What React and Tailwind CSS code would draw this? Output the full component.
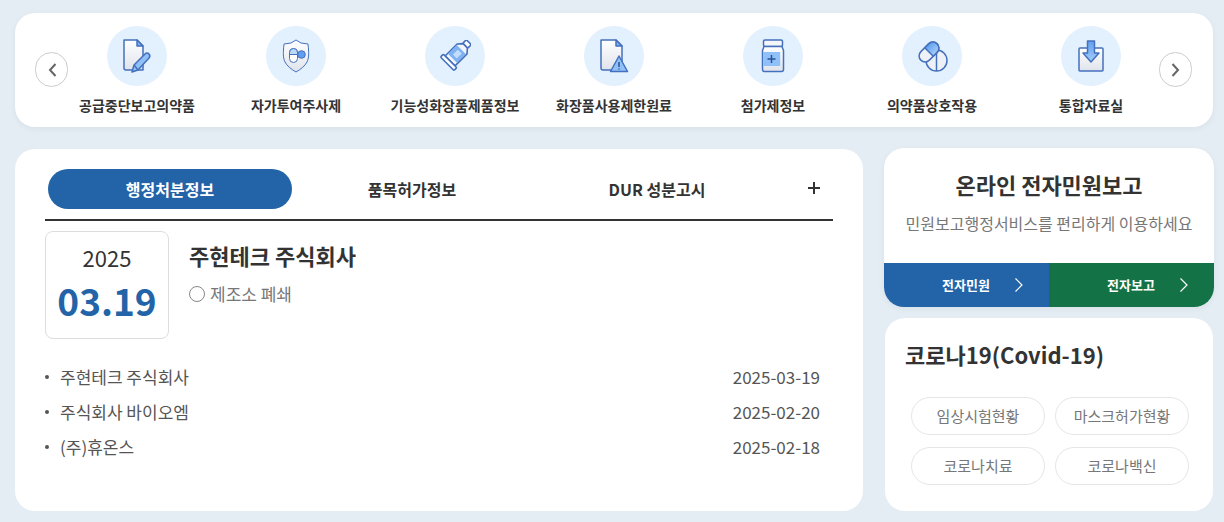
import React from "react";

const STROKE = "#4570bd";

const Grads = () => (
  <svg width="0" height="0" className="absolute">
    <defs>
      <linearGradient id="paper" x1="0" y1="0" x2="0" y2="1">
        <stop offset="0" stopColor="#ffffff" />
        <stop offset="1" stopColor="#dfe3ea" />
      </linearGradient>
      <linearGradient id="sky" x1="0" y1="0" x2="0" y2="1">
        <stop offset="0" stopColor="#5f9ff0" />
        <stop offset="1" stopColor="#a5cdf8" />
      </linearGradient>
    </defs>
  </svg>
);

const DocIcon = () => (
  <svg width="30" height="34" viewBox="0 0 30 34" fill="none" stroke={STROKE} strokeWidth="1.5" strokeLinejoin="round">
    <path d="M2 1h13l6 6v24H4a2 2 0 0 1-2-2z" fill="url(#paper)" />
    <path d="M15 1v6h6z" fill="#7fb2f2" />
    <path d="M10 33l2-7L23 15a2.500 2.500 0 0 1 4 0 3 3 0 0 1 0 4L16 31z" fill="#8fc0f7" />
    <path d="M12 26l4 5" />
  </svg>
);

const ShieldIcon = () => (
  <svg width="28" height="34" viewBox="0 0 28 34" fill="none" stroke={STROKE} strokeWidth="1">
    <path d="M14 1l5 3 7 1c1 9 1 14-1 18-2 4-6 7-11 10C9 30 5 27 3 23 1 19 1 14 2 5l7-1z" fill="url(#paper)" />
    <rect x="7.500" y="9.500" width="8" height="14" rx="4" fill="#fff" />
    <path d="M7.500 15.500v-2a4 4 0 0 1 8 0v2z" fill="#bcd9fa" />
    <path d="M7.500 15.500h8" />
    <circle cx="19.500" cy="15.500" r="3.800" fill="#5f9ff0" />
  </svg>
);

const TubeIcon = () => (
  <svg width="32" height="32" viewBox="0 0 32 32" fill="none" stroke={STROKE} strokeWidth="1.600" strokeLinejoin="round">
    <g transform="rotate(45 16 16)">
      <rect x="12.500" y="-3.500" width="7" height="5" rx="1" fill="#fff" />
      <path d="M13 1.500h6l4 4.500v17H9V6z" fill="#f2f5f9" />
      <rect x="9.800" y="7" width="12.400" height="12.500" fill="#7fb2f2" stroke="none" />
      <rect x="13.500" y="9.500" width="5.500" height="7" fill="#c4ddfa" stroke="none" />
      <rect x="6.500" y="23" width="19" height="4" rx="1" fill="#fff" />
    </g>
  </svg>
);

const WarnIcon = () => (
  <svg width="30" height="34" viewBox="0 0 30 34" fill="none" stroke={STROKE} strokeWidth="1.500" strokeLinejoin="round">
    <path d="M2 1h15l6 6v24H4a2 2 0 0 1-2-2z" fill="url(#paper)" />
    <path d="M17 1v6h6z" fill="#7fb2f2" />
    <path d="M20 17l8.500 15.500h-17z" fill="#8fc0f7" />
    <path d="M20 23v5M20 29.500v1" stroke="#2b4f93" />
  </svg>
);

const BottleIcon = () => (
  <svg width="24" height="34" viewBox="0 0 24 34" fill="none" stroke={STROKE} strokeWidth="1.500" strokeLinejoin="round">
    <rect x="2.500" y="1" width="19" height="6.500" rx="1.500" fill="#f4f6f9" />
    <path d="M3 7.500h18l1.500 4v19a2 2 0 0 1-2 2h-17a2 2 0 0 1-2-2v-19z" fill="url(#paper)" />
    <rect x="2.200" y="13" width="17" height="14" fill="#8fc0f7" stroke="none" />
    <path d="M6.500 20h8M10.500 16v8" stroke="#2b4f93" />
  </svg>
);

const PillIcon = () => (
  <svg width="32" height="32" viewBox="0 0 32 32" fill="none" stroke={STROKE} strokeWidth="1.500">
    <circle cx="20.500" cy="20.500" r="10.500" fill="#edf0f5" />
    <path d="M20.500 13v18" />
    <g transform="rotate(-45 13 12)">
      <rect x="1.500" y="6" width="23" height="12" rx="6" fill="#eef1f6" />
      <path d="M13 6h5.500a6 6 0 0 1 0 12H13z" fill="url(#sky)" />
    </g>
  </svg>
);

const DownIcon = () => (
  <svg width="26" height="32" viewBox="0 0 26 32" fill="none" stroke={STROKE} strokeWidth="1.500" strokeLinejoin="round">
    <rect x="1" y="8" width="24" height="23" rx="1" fill="url(#paper)" />
    <path d="M9.500 1h7v12H21l-8 9-8-9h4.500z" fill="url(#sky)" />
  </svg>
);

const Chevron = ({ dir, cls, thin }) => (
  <svg width="10" height="16" viewBox="0 0 10 16" fill="none" stroke="currentColor" className={cls}>
    {thin ? (
      <path d="M1.500 1.500L8 8l-6.500 6.500" strokeWidth="1.200" />
    ) : (
      <path d={dir === "left" ? "M8.500 2L3 8l5.500 6" : "M1.500 2L7 8l-5.500 6"} strokeWidth="2" />
    )}
  </svg>
);

const slides = [
  { label: "공급중단보고의약품", icon: <DocIcon /> },
  { label: "자가투여주사제", icon: <ShieldIcon /> },
  { label: "기능성화장품제품정보", icon: <TubeIcon /> },
  { label: "화장품사용제한원료", icon: <WarnIcon /> },
  { label: "첨가제정보", icon: <BottleIcon /> },
  { label: "의약품상호작용", icon: <PillIcon /> },
  { label: "통합자료실", icon: <DownIcon /> },
];

const news = [
  { name: "주현테크 주식회사", date: "2025-03-19" },
  { name: "주식회사 바이오엠", date: "2025-02-20" },
  { name: "(주)휴온스", date: "2025-02-18" },
];

const covid = ["임상시험현황", "마스크허가현황", "코로나치료", "코로나백신"];

const App = () => {
  return (
    <div className="w-[1224px] h-[522px] overflow-hidden bg-[#e4ecf4] px-[15px] pt-[13px] text-[#333] font-['Noto_Sans_CJK_KR','Noto_Sans',sans-serif]">
      <Grads />
      <section className="relative w-[1198px] h-[114px] rounded-[20px] bg-white shadow-[0_2px_6px_rgba(0,0,0,0.05)] flex justify-center pt-[13px]">
        <button type="button" className="absolute left-[20px] top-[39px] w-[33px] h-[35px] rounded-full border border-[#ccc] bg-white text-[#666] flex items-center justify-center">
          <Chevron dir="left" />
        </button>
        {slides.map((s) => (
          <div key={s.label} className="w-[159px] flex flex-col items-center">
            <div className="w-[60px] h-[60px] rounded-full bg-[#e3f0fd] flex items-center justify-center">{s.icon}</div>
            <span className="mt-[9px] text-[14px] leading-[20px] font-bold text-[#333] whitespace-nowrap">{s.label}</span>
          </div>
        ))}
        <button type="button" className="absolute right-[21px] top-[39px] w-[33px] h-[35px] rounded-full border border-[#ccc] bg-white text-[#666] flex items-center justify-center">
          <Chevron dir="right" />
        </button>
      </section>

      <div className="flex mt-[21px]">
        <section className="w-[848px] h-[362px] mt-[1px] rounded-[20px] bg-white px-[30px] pt-[20px]">
          <div className="w-[788px] h-[52px] border-b-2 border-[#333] flex items-start text-[16px] font-bold">
            <div className="ml-[3px] w-[244px] h-[40px] rounded-full bg-[#2364a8] text-white flex items-center justify-center">행정처분정보</div>
            <div className="w-[240px] h-[40px] flex items-center justify-center">품목허가정보</div>
            <div className="w-[250px] h-[40px] flex items-center justify-center">DUR 성분고시</div>
            <svg width="12" height="12" viewBox="0 0 12 12" className="ml-[26px] mt-[13px]" stroke="#333" strokeWidth="2">
              <path d="M6 0v12M0 6h12" />
            </svg>
          </div>
          <div className="flex mt-[10px]">
            <div className="w-[124px] h-[108px] rounded-[8px] border border-[#ddd] flex flex-col items-center">
              <span className="mt-[9px] text-[22px] leading-[32px] text-[#333]">2025</span>
              <span className="mt-[2px] text-[37px] leading-[50px] font-bold text-[#2364a8]">03.19</span>
            </div>
            <div className="ml-[20px]">
              <h3 className="mt-[8px] text-[22px] leading-[32px] font-bold text-[#333]">주현테크 주식회사</h3>
              <div className="mt-[11px] flex items-center text-[17px] leading-[24px] text-[#777]">
                <span className="w-[16px] h-[16px] rounded-full border border-[#888] mr-[5px]" />
                제조소 폐쇄
              </div>
            </div>
          </div>
          <ul className="mt-[20px] w-[775px]">
            {news.map((n) => (
              <li key={n.name} className="h-[35px] flex items-center justify-between text-[17px] text-[#555]">
                <span className="flex items-center">
                  <span className="w-[4px] h-[4px] rounded-full bg-[#555] mr-[11px]" />
                  {n.name}
                </span>
                <span>{n.date}</span>
              </li>
            ))}
          </ul>
        </section>

        <div className="ml-[21px] w-[330px]">
          <section className="h-[159px] rounded-[20px] bg-white overflow-hidden flex flex-col shadow-[0_2px_6px_rgba(0,0,0,0.05)]">
            <h3 className="mt-[19px] text-center text-[22px] leading-[34px] font-bold text-[#333]">온라인 전자민원보고</h3>
            <p className="mt-[11px] text-center text-[16px] leading-[22px] text-[#777]">민원보고행정서비스를 편리하게 이용하세요</p>
            <div className="mt-auto h-[44px] flex text-white text-[13px] font-bold">
              <div className="w-[165px] bg-[#2364a8] flex items-center pl-[58px]">
                <span>전자민원</span>
                <Chevron thin cls="ml-[24px]" />
              </div>
              <div className="w-[165px] bg-[#147346] flex items-center pl-[58px]">
                <span>전자보고</span>
                <Chevron thin cls="ml-[24px]" />
              </div>
            </div>
          </section>
          <section className="mt-[11px] mx-[1px] h-[193px] rounded-[20px] bg-white px-[20px] pt-[18px]">
            <h3 className="text-[22px] leading-[36px] font-bold text-[#333]">코로나19(Covid-19)</h3>
            <div className="mt-[25px] ml-[6px] grid grid-cols-[134px_134px] gap-x-[10px] gap-y-[12px]">
              {covid.map((c) => (
                <div key={c} className="h-[38px] rounded-full border border-[#e6e6e6] flex items-center justify-center text-[15px] text-[#777]">{c}</div>
              ))}
            </div>
          </section>
        </div>
      </div>
    </div>
  );
};

export default App;
